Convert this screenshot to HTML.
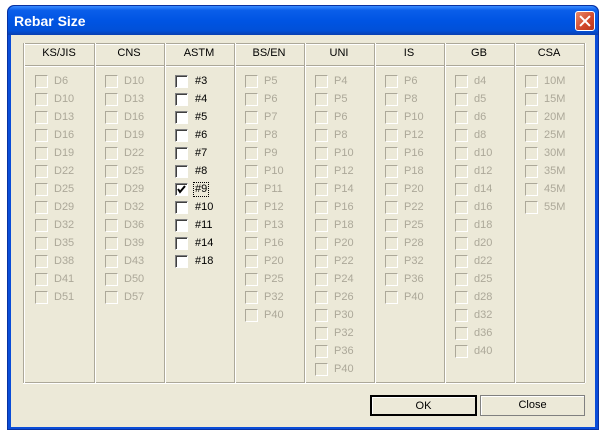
<!DOCTYPE html>
<html><head><meta charset="utf-8"><style>
*{margin:0;padding:0;box-sizing:border-box}
body{width:610px;height:434px;background:#fff;position:relative;overflow:hidden;font-family:Tahoma,"Liberation Sans",sans-serif;font-size:11px}
.win{position:absolute;left:7px;top:5px;width:592px;height:425px;background:#0A4DD8;border-radius:7px 7px 0 0;border:1px solid #0831A0}
.title{position:absolute;left:0;top:0;right:0;height:29px;border-radius:7px 7px 0 0;background:linear-gradient(#3A8CFF 0%,#0A5EEA 15%,#0054E3 50%,#0150D8 85%,#0A3FB0 100%)}
.title span{position:absolute;left:6px;top:7px;color:#fff;font-weight:bold;font-size:14px;font-family:"Liberation Sans",sans-serif}
.x{position:absolute;left:567px;top:5px;width:20px;height:20px;border:1px solid #fff;border-radius:3px;background:linear-gradient(135deg,#E98A6A,#D0462A 60%,#B9381E)}
.x:before,.x:after{content:"";position:absolute;left:8px;top:2px;width:2px;height:14px;background:#fff}
.x:before{transform:rotate(45deg)}.x:after{transform:rotate(-45deg)}
.body{position:absolute;left:3px;top:29px;width:584px;height:392px;background:#ECE9D8}
.v{position:absolute;width:1px;background:#ACA899;box-shadow:1px 0 0 #fff}
.h{position:absolute;height:1px;background:#ACA899;box-shadow:0 1px 0 #fff}
.hd{position:absolute;top:47px;width:70px;text-align:center;color:#000}
.c{position:absolute;width:13px;height:13px;border:1px solid;border-color:#ACA899 #fff #fff #ACA899;background:#ECE9D8}
.c.e{border:1px solid;border-color:#808080 #fff #fff #808080;background:#fff;box-shadow:inset 1px 1px 0 #404040}
.l{position:absolute;color:#ACA899;line-height:13px}
.l.e{color:#000}
.btn{position:absolute;top:395px;height:21px;border:1px solid #808080;background:#ECE9D8;text-align:center;line-height:19px;color:#000;box-shadow:inset 1px 1px 0 #fff}
</style></head><body>
<div class="win"><div class="title"><span>Rebar Size</span><div class="x"></div></div><div class="body"></div></div>
<div class="h" style="left:23px;top:43px;width:562px"></div>
<div class="h" style="left:23px;top:382px;width:562px"></div>
<div class="h" style="left:23px;top:65px;width:562px"></div>
<div class="v" style="left:23px;top:43px;height:340px"></div>
<div class="v" style="left:94px;top:43px;height:340px"></div>
<div class="v" style="left:164px;top:43px;height:340px"></div>
<div class="v" style="left:234px;top:43px;height:340px"></div>
<div class="v" style="left:304px;top:43px;height:340px"></div>
<div class="v" style="left:374px;top:43px;height:340px"></div>
<div class="v" style="left:444px;top:43px;height:340px"></div>
<div class="v" style="left:514px;top:43px;height:340px"></div>
<div class="v" style="left:584px;top:43px;height:340px"></div>
<div class="hd" style="left:24px">KS/JIS</div>
<div class="hd" style="left:94px">CNS</div>
<div class="hd" style="left:164px">ASTM</div>
<div class="hd" style="left:234px">BS/EN</div>
<div class="hd" style="left:304px">UNI</div>
<div class="hd" style="left:374px">IS</div>
<div class="hd" style="left:444px">GB</div>
<div class="hd" style="left:514px">CSA</div>

<div class="c" style="left:35px;top:75px"></div><div class="l" style="left:54px;top:75px">D6</div>
<div class="c" style="left:35px;top:93px"></div><div class="l" style="left:54px;top:93px">D10</div>
<div class="c" style="left:35px;top:111px"></div><div class="l" style="left:54px;top:111px">D13</div>
<div class="c" style="left:35px;top:129px"></div><div class="l" style="left:54px;top:129px">D16</div>
<div class="c" style="left:35px;top:147px"></div><div class="l" style="left:54px;top:147px">D19</div>
<div class="c" style="left:35px;top:165px"></div><div class="l" style="left:54px;top:165px">D22</div>
<div class="c" style="left:35px;top:183px"></div><div class="l" style="left:54px;top:183px">D25</div>
<div class="c" style="left:35px;top:201px"></div><div class="l" style="left:54px;top:201px">D29</div>
<div class="c" style="left:35px;top:219px"></div><div class="l" style="left:54px;top:219px">D32</div>
<div class="c" style="left:35px;top:237px"></div><div class="l" style="left:54px;top:237px">D35</div>
<div class="c" style="left:35px;top:255px"></div><div class="l" style="left:54px;top:255px">D38</div>
<div class="c" style="left:35px;top:273px"></div><div class="l" style="left:54px;top:273px">D41</div>
<div class="c" style="left:35px;top:291px"></div><div class="l" style="left:54px;top:291px">D51</div>
<div class="c" style="left:105px;top:75px"></div><div class="l" style="left:124px;top:75px">D10</div>
<div class="c" style="left:105px;top:93px"></div><div class="l" style="left:124px;top:93px">D13</div>
<div class="c" style="left:105px;top:111px"></div><div class="l" style="left:124px;top:111px">D16</div>
<div class="c" style="left:105px;top:129px"></div><div class="l" style="left:124px;top:129px">D19</div>
<div class="c" style="left:105px;top:147px"></div><div class="l" style="left:124px;top:147px">D22</div>
<div class="c" style="left:105px;top:165px"></div><div class="l" style="left:124px;top:165px">D25</div>
<div class="c" style="left:105px;top:183px"></div><div class="l" style="left:124px;top:183px">D29</div>
<div class="c" style="left:105px;top:201px"></div><div class="l" style="left:124px;top:201px">D32</div>
<div class="c" style="left:105px;top:219px"></div><div class="l" style="left:124px;top:219px">D36</div>
<div class="c" style="left:105px;top:237px"></div><div class="l" style="left:124px;top:237px">D39</div>
<div class="c" style="left:105px;top:255px"></div><div class="l" style="left:124px;top:255px">D43</div>
<div class="c" style="left:105px;top:273px"></div><div class="l" style="left:124px;top:273px">D50</div>
<div class="c" style="left:105px;top:291px"></div><div class="l" style="left:124px;top:291px">D57</div>
<div class="c e" style="left:175px;top:75px"></div><div class="l e" style="left:195px;top:75px">#3</div>
<div class="c e" style="left:175px;top:93px"></div><div class="l e" style="left:195px;top:93px">#4</div>
<div class="c e" style="left:175px;top:111px"></div><div class="l e" style="left:195px;top:111px">#5</div>
<div class="c e" style="left:175px;top:129px"></div><div class="l e" style="left:195px;top:129px">#6</div>
<div class="c e" style="left:175px;top:147px"></div><div class="l e" style="left:195px;top:147px">#7</div>
<div class="c e" style="left:175px;top:165px"></div><div class="l e" style="left:195px;top:165px">#8</div>
<div class="c e" style="left:175px;top:183px"><svg width="11" height="11" style="position:absolute;left:0;top:0"><path d="M2 5 L4 8 L9 2" stroke="#000" stroke-width="2" fill="none"/></svg></div><div class="l e" style="left:193px;top:182px;border:1px dotted #000;padding:0 1px">#9</div>
<div class="c e" style="left:175px;top:201px"></div><div class="l e" style="left:195px;top:201px">#10</div>
<div class="c e" style="left:175px;top:219px"></div><div class="l e" style="left:195px;top:219px">#11</div>
<div class="c e" style="left:175px;top:237px"></div><div class="l e" style="left:195px;top:237px">#14</div>
<div class="c e" style="left:175px;top:255px"></div><div class="l e" style="left:195px;top:255px">#18</div>
<div class="c" style="left:245px;top:75px"></div><div class="l" style="left:264px;top:75px">P5</div>
<div class="c" style="left:245px;top:93px"></div><div class="l" style="left:264px;top:93px">P6</div>
<div class="c" style="left:245px;top:111px"></div><div class="l" style="left:264px;top:111px">P7</div>
<div class="c" style="left:245px;top:129px"></div><div class="l" style="left:264px;top:129px">P8</div>
<div class="c" style="left:245px;top:147px"></div><div class="l" style="left:264px;top:147px">P9</div>
<div class="c" style="left:245px;top:165px"></div><div class="l" style="left:264px;top:165px">P10</div>
<div class="c" style="left:245px;top:183px"></div><div class="l" style="left:264px;top:183px">P11</div>
<div class="c" style="left:245px;top:201px"></div><div class="l" style="left:264px;top:201px">P12</div>
<div class="c" style="left:245px;top:219px"></div><div class="l" style="left:264px;top:219px">P13</div>
<div class="c" style="left:245px;top:237px"></div><div class="l" style="left:264px;top:237px">P16</div>
<div class="c" style="left:245px;top:255px"></div><div class="l" style="left:264px;top:255px">P20</div>
<div class="c" style="left:245px;top:273px"></div><div class="l" style="left:264px;top:273px">P25</div>
<div class="c" style="left:245px;top:291px"></div><div class="l" style="left:264px;top:291px">P32</div>
<div class="c" style="left:245px;top:309px"></div><div class="l" style="left:264px;top:309px">P40</div>
<div class="c" style="left:315px;top:75px"></div><div class="l" style="left:334px;top:75px">P4</div>
<div class="c" style="left:315px;top:93px"></div><div class="l" style="left:334px;top:93px">P5</div>
<div class="c" style="left:315px;top:111px"></div><div class="l" style="left:334px;top:111px">P6</div>
<div class="c" style="left:315px;top:129px"></div><div class="l" style="left:334px;top:129px">P8</div>
<div class="c" style="left:315px;top:147px"></div><div class="l" style="left:334px;top:147px">P10</div>
<div class="c" style="left:315px;top:165px"></div><div class="l" style="left:334px;top:165px">P12</div>
<div class="c" style="left:315px;top:183px"></div><div class="l" style="left:334px;top:183px">P14</div>
<div class="c" style="left:315px;top:201px"></div><div class="l" style="left:334px;top:201px">P16</div>
<div class="c" style="left:315px;top:219px"></div><div class="l" style="left:334px;top:219px">P18</div>
<div class="c" style="left:315px;top:237px"></div><div class="l" style="left:334px;top:237px">P20</div>
<div class="c" style="left:315px;top:255px"></div><div class="l" style="left:334px;top:255px">P22</div>
<div class="c" style="left:315px;top:273px"></div><div class="l" style="left:334px;top:273px">P24</div>
<div class="c" style="left:315px;top:291px"></div><div class="l" style="left:334px;top:291px">P26</div>
<div class="c" style="left:315px;top:309px"></div><div class="l" style="left:334px;top:309px">P30</div>
<div class="c" style="left:315px;top:327px"></div><div class="l" style="left:334px;top:327px">P32</div>
<div class="c" style="left:315px;top:345px"></div><div class="l" style="left:334px;top:345px">P36</div>
<div class="c" style="left:315px;top:363px"></div><div class="l" style="left:334px;top:363px">P40</div>
<div class="c" style="left:385px;top:75px"></div><div class="l" style="left:404px;top:75px">P6</div>
<div class="c" style="left:385px;top:93px"></div><div class="l" style="left:404px;top:93px">P8</div>
<div class="c" style="left:385px;top:111px"></div><div class="l" style="left:404px;top:111px">P10</div>
<div class="c" style="left:385px;top:129px"></div><div class="l" style="left:404px;top:129px">P12</div>
<div class="c" style="left:385px;top:147px"></div><div class="l" style="left:404px;top:147px">P16</div>
<div class="c" style="left:385px;top:165px"></div><div class="l" style="left:404px;top:165px">P18</div>
<div class="c" style="left:385px;top:183px"></div><div class="l" style="left:404px;top:183px">P20</div>
<div class="c" style="left:385px;top:201px"></div><div class="l" style="left:404px;top:201px">P22</div>
<div class="c" style="left:385px;top:219px"></div><div class="l" style="left:404px;top:219px">P25</div>
<div class="c" style="left:385px;top:237px"></div><div class="l" style="left:404px;top:237px">P28</div>
<div class="c" style="left:385px;top:255px"></div><div class="l" style="left:404px;top:255px">P32</div>
<div class="c" style="left:385px;top:273px"></div><div class="l" style="left:404px;top:273px">P36</div>
<div class="c" style="left:385px;top:291px"></div><div class="l" style="left:404px;top:291px">P40</div>
<div class="c" style="left:455px;top:75px"></div><div class="l" style="left:474px;top:75px">d4</div>
<div class="c" style="left:455px;top:93px"></div><div class="l" style="left:474px;top:93px">d5</div>
<div class="c" style="left:455px;top:111px"></div><div class="l" style="left:474px;top:111px">d6</div>
<div class="c" style="left:455px;top:129px"></div><div class="l" style="left:474px;top:129px">d8</div>
<div class="c" style="left:455px;top:147px"></div><div class="l" style="left:474px;top:147px">d10</div>
<div class="c" style="left:455px;top:165px"></div><div class="l" style="left:474px;top:165px">d12</div>
<div class="c" style="left:455px;top:183px"></div><div class="l" style="left:474px;top:183px">d14</div>
<div class="c" style="left:455px;top:201px"></div><div class="l" style="left:474px;top:201px">d16</div>
<div class="c" style="left:455px;top:219px"></div><div class="l" style="left:474px;top:219px">d18</div>
<div class="c" style="left:455px;top:237px"></div><div class="l" style="left:474px;top:237px">d20</div>
<div class="c" style="left:455px;top:255px"></div><div class="l" style="left:474px;top:255px">d22</div>
<div class="c" style="left:455px;top:273px"></div><div class="l" style="left:474px;top:273px">d25</div>
<div class="c" style="left:455px;top:291px"></div><div class="l" style="left:474px;top:291px">d28</div>
<div class="c" style="left:455px;top:309px"></div><div class="l" style="left:474px;top:309px">d32</div>
<div class="c" style="left:455px;top:327px"></div><div class="l" style="left:474px;top:327px">d36</div>
<div class="c" style="left:455px;top:345px"></div><div class="l" style="left:474px;top:345px">d40</div>
<div class="c" style="left:525px;top:75px"></div><div class="l" style="left:544px;top:75px">10M</div>
<div class="c" style="left:525px;top:93px"></div><div class="l" style="left:544px;top:93px">15M</div>
<div class="c" style="left:525px;top:111px"></div><div class="l" style="left:544px;top:111px">20M</div>
<div class="c" style="left:525px;top:129px"></div><div class="l" style="left:544px;top:129px">25M</div>
<div class="c" style="left:525px;top:147px"></div><div class="l" style="left:544px;top:147px">30M</div>
<div class="c" style="left:525px;top:165px"></div><div class="l" style="left:544px;top:165px">35M</div>
<div class="c" style="left:525px;top:183px"></div><div class="l" style="left:544px;top:183px">45M</div>
<div class="c" style="left:525px;top:201px"></div><div class="l" style="left:544px;top:201px">55M</div>

<div class="btn" style="left:370px;width:107px;border:2px solid #000">OK</div>
<div class="btn" style="left:480px;width:105px">Close</div>
</body></html>
